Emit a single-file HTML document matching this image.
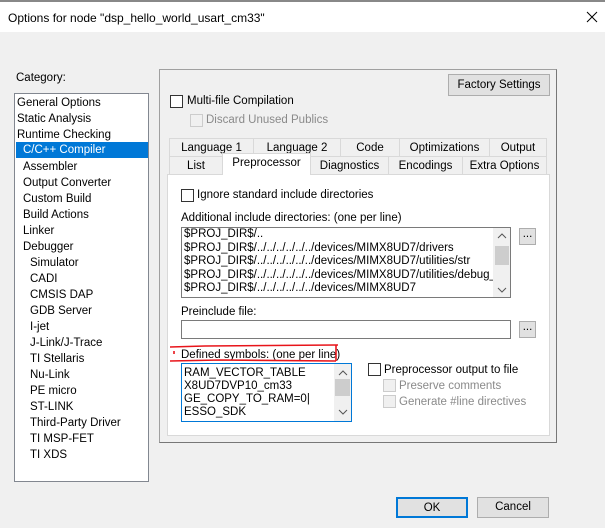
<!DOCTYPE html>
<html><head><style>
*{margin:0;padding:0;box-sizing:border-box}
body{width:605px;height:528px;background:#f0f0f0;font-family:"Liberation Sans",sans-serif;font-size:11.5px;color:#000;position:relative;overflow:hidden}
.a{position:absolute;white-space:nowrap}
.cb{position:absolute;width:13px;height:13px;border:1px solid #333;background:#fff}
.cbd{position:absolute;width:13px;height:13px;border:1px solid #ccc;background:#f0f0f0}
.btn{position:absolute;background:#e1e1e1;border:1px solid #adadad;text-align:center}
.box{position:absolute;background:#fff;border:1px solid #7a7a7a}
.tab{position:absolute;border:1px solid #d9d9d9;background:#f0f0f0;text-align:center;height:19px;line-height:19px}
.it{position:absolute;left:0;height:16px;line-height:16px}
.mono{font-size:11.5px;line-height:13.5px}
</style></head><body>
<div class="a" style="left:0;top:0;width:605px;height:2px;background:#888"></div>
<div class="a" style="left:0;top:2px;width:605px;height:30px;background:#fff"></div>
<div class="a" style="left:8px;top:11px;font-size:12px">Options for node "dsp_hello_world_usart_cm33"</div>
<svg class="a" style="left:586px;top:11px" width="12" height="12"><path d="M1 1L11 11M11 1L1 11" stroke="#000" stroke-width="1"/></svg>

<div class="a" style="left:16px;top:72px">Category:</div>
<div class="box" style="left:14px;top:93px;width:135px;height:389px;border-color:#828790">
<div class="it" style="left:2px;top:1px">General Options</div>
<div class="it" style="left:2px;top:17px">Static Analysis</div>
<div class="it" style="left:2px;top:33px">Runtime Checking</div>
<div class="it" style="left:1px;top:48px;width:132px;background:#0078d7;color:#fff;padding-left:7px">C/C++ Compiler</div>
<div class="it" style="left:8px;top:65px">Assembler</div>
<div class="it" style="left:8px;top:81px">Output Converter</div>
<div class="it" style="left:8px;top:97px">Custom Build</div>
<div class="it" style="left:8px;top:113px">Build Actions</div>
<div class="it" style="left:8px;top:129px">Linker</div>
<div class="it" style="left:8px;top:145px">Debugger</div>
<div class="it" style="left:15px;top:161px">Simulator</div>
<div class="it" style="left:15px;top:177px">CADI</div>
<div class="it" style="left:15px;top:193px">CMSIS DAP</div>
<div class="it" style="left:15px;top:209px">GDB Server</div>
<div class="it" style="left:15px;top:225px">I-jet</div>
<div class="it" style="left:15px;top:241px">J-Link/J-Trace</div>
<div class="it" style="left:15px;top:257px">TI Stellaris</div>
<div class="it" style="left:15px;top:273px">Nu-Link</div>
<div class="it" style="left:15px;top:289px">PE micro</div>
<div class="it" style="left:15px;top:305px">ST-LINK</div>
<div class="it" style="left:15px;top:321px">Third-Party Driver</div>
<div class="it" style="left:15px;top:337px">TI MSP-FET</div>
<div class="it" style="left:15px;top:353px">TI XDS</div>
</div>

<div class="a" style="left:159px;top:69px;width:398px;height:374px;border:1px solid #a0a0a0;border-right-color:#777;border-bottom-color:#777"></div>
<div class="btn" style="left:448px;top:74px;width:102px;height:22px;line-height:21px">Factory Settings</div>
<div class="cb" style="left:170px;top:95px"></div>
<div class="a" style="left:187px;top:95px">Multi-file Compilation</div>
<div class="cbd" style="left:190px;top:114px"></div>
<div class="a" style="left:206px;top:114px;color:#8a8a8a">Discard Unused Publics</div>

<div class="tab" style="left:169px;top:138px;width:85px">Language 1</div>
<div class="tab" style="left:253px;top:138px;width:88px">Language 2</div>
<div class="tab" style="left:340px;top:138px;width:60px">Code</div>
<div class="tab" style="left:399px;top:138px;width:91px">Optimizations</div>
<div class="tab" style="left:489px;top:138px;width:58px">Output</div>
<div class="tab" style="left:169px;top:156px;width:54px">List</div>
<div class="tab" style="left:310px;top:156px;width:79px">Diagnostics</div>
<div class="tab" style="left:388px;top:156px;width:75px">Encodings</div>
<div class="tab" style="left:462px;top:156px;width:85px">Extra Options</div>
<div class="a" style="left:167px;top:174px;width:383px;height:262px;background:#fff;border:1px solid #d9d9d9"></div>
<div class="a" style="left:222px;top:153px;width:89px;height:22px;background:#fff;border:1px solid #d9d9d9;border-bottom:none;text-align:center;line-height:19px">Preprocessor</div>

<div class="cb" style="left:181px;top:189px"></div>
<div class="a" style="left:197px;top:189px">Ignore standard include directories</div>
<div class="a" style="left:181px;top:212px">Additional include directories: (one per line)</div>
<div class="box" style="left:181px;top:227px;width:330px;height:71px">
<div class="a mono" style="left:2px;top:0px">$PROJ_DIR$/..<br>$PROJ_DIR$/../../../../../../devices/MIMX8UD7/drivers<br>$PROJ_DIR$/../../../../../../devices/MIMX8UD7/utilities/str<br>$PROJ_DIR$/../../../../../../devices/MIMX8UD7/utilities/debug_<br>$PROJ_DIR$/../../../../../../devices/MIMX8UD7</div>
<div class="a" style="left:311px;top:0;width:17px;height:69px;background:#f0f0f0"></div>
<div class="a" style="left:313px;top:18px;width:14px;height:19px;background:#cdcdcd"></div>
<svg class="a" style="left:314px;top:4px" width="12" height="8"><path d="M2 6L6 2L10 6" stroke="#555" fill="none"/></svg>
<svg class="a" style="left:314px;top:58px" width="12" height="8"><path d="M2 2L6 6L10 2" stroke="#555" fill="none"/></svg>
</div>
<div class="btn" style="left:519px;top:228px;width:17px;height:17px;line-height:11px">...</div>
<div class="a" style="left:181px;top:306px">Preinclude file:</div>
<div class="box" style="left:181px;top:320px;width:330px;height:19px"></div>
<div class="btn" style="left:519px;top:321px;width:17px;height:17px;line-height:11px">...</div>

<div class="a" style="left:181px;top:349px">Defined symbols: (one per line)</div>
<svg class="a" style="left:0;top:0" width="605" height="528"><g stroke="#e8141a" stroke-width="1.6" fill="none">
<path d="M170 347L205 346L336 345L338 345"/>
<path d="M336 345L336 361"/>
<path d="M170 361L220 360L336 361"/>
<path d="M174 351L174 354"/></g></svg>
<div class="box" style="left:181px;top:363px;width:171px;height:59px;border-color:#0078d7">
<div class="a mono" style="left:2px;top:3px;line-height:13px">RAM_VECTOR_TABLE<br>X8UD7DVP10_cm33<br>GE_COPY_TO_RAM=0|<br>ESSO_SDK</div>
<div class="a" style="left:152px;top:0;width:17px;height:57px;background:#f0f0f0"></div>
<div class="a" style="left:153px;top:15px;width:15px;height:17px;background:#cdcdcd"></div>
<svg class="a" style="left:155px;top:5px" width="12" height="8"><path d="M2 6L6 2L10 6" stroke="#555" fill="none"/></svg>
<svg class="a" style="left:155px;top:44px" width="12" height="8"><path d="M2 2L6 6L10 2" stroke="#555" fill="none"/></svg>
</div>
<div class="cb" style="left:368px;top:363px"></div>
<div class="a" style="left:384px;top:364px">Preprocessor output to file</div>
<div class="cbd" style="left:383px;top:379px"></div>
<div class="a" style="left:399px;top:380px;color:#8a8a8a">Preserve comments</div>
<div class="cbd" style="left:383px;top:395px"></div>
<div class="a" style="left:399px;top:396px;color:#8a8a8a">Generate #line directives</div>

<div class="btn" style="left:396px;top:497px;width:72px;height:21px;line-height:18px;border:2px solid #0078d7">OK</div>
<div class="btn" style="left:477px;top:497px;width:72px;height:21px;line-height:19px">Cancel</div>
</body></html>
